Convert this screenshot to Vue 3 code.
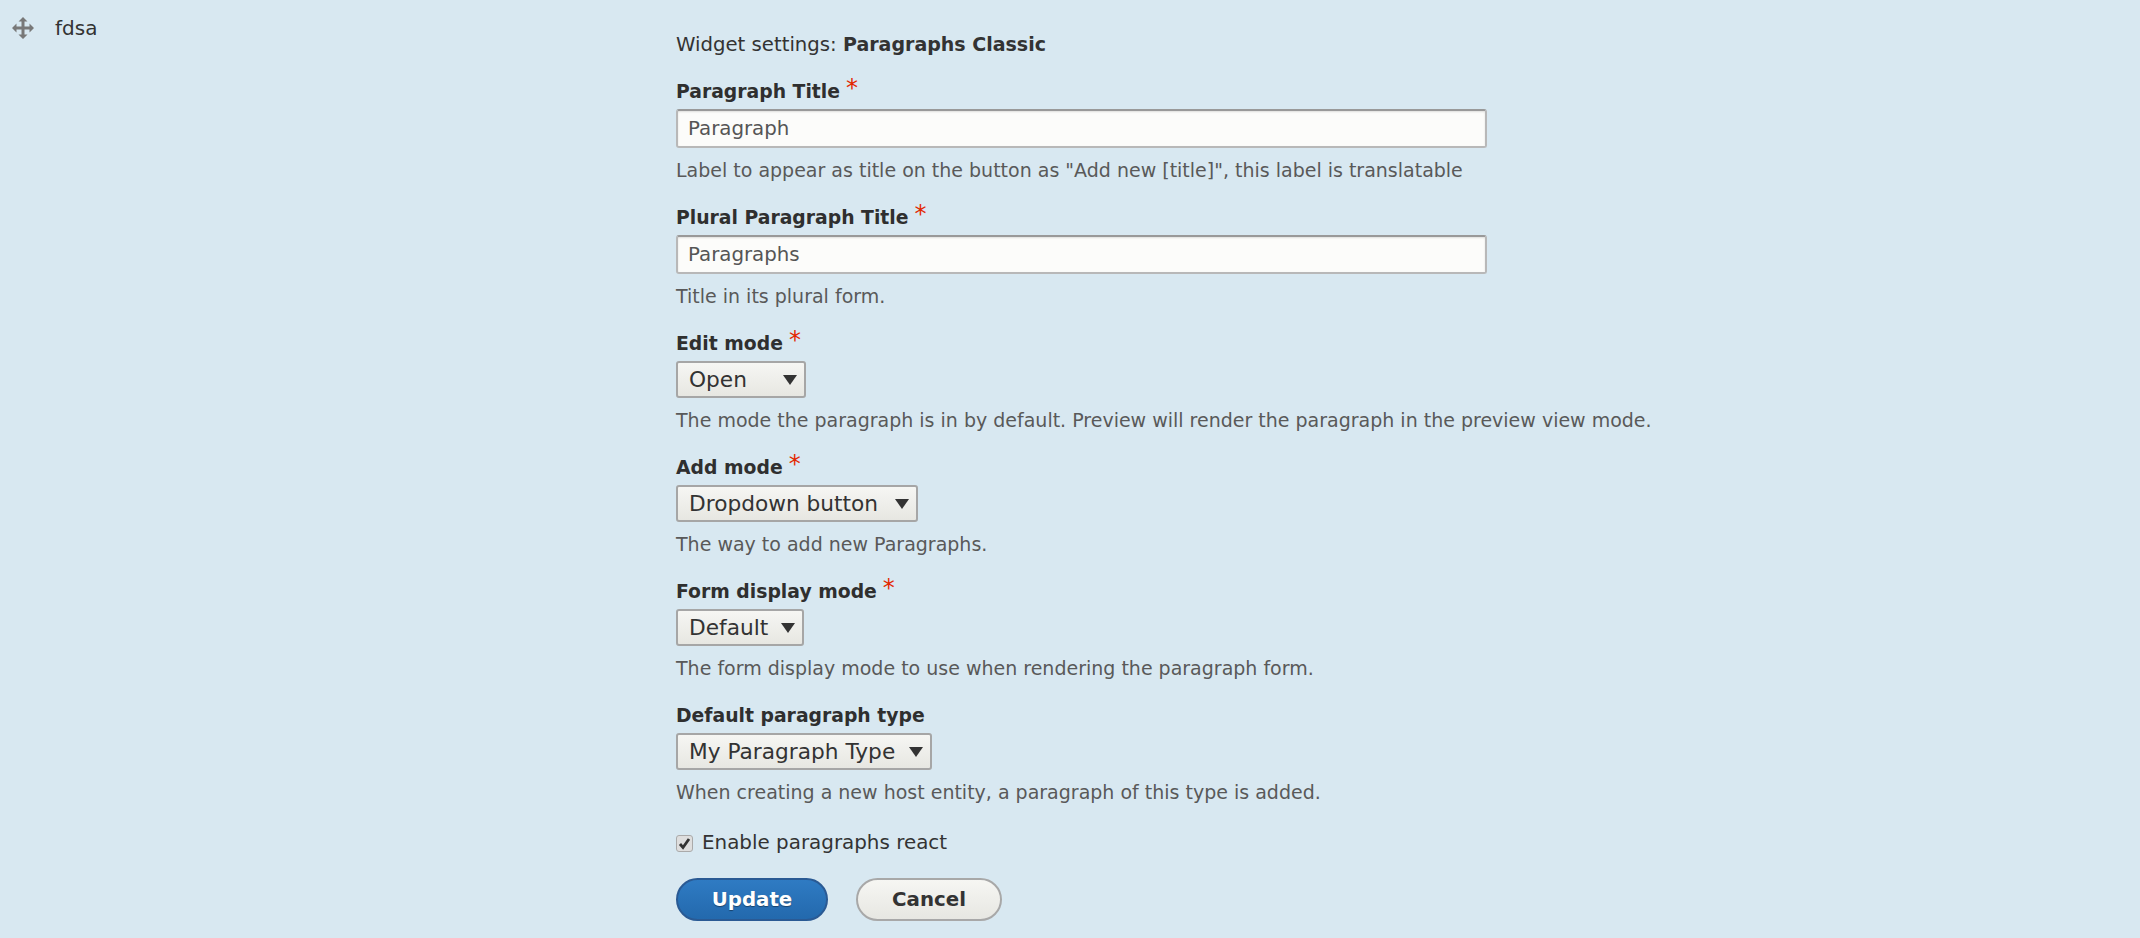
<template>
  <div class="page">
    <div class="row-head">
      <svg class="handle" width="24" height="24" viewBox="0 0 24 24" aria-hidden="true">
        <path d="M12 1l4.500 4.500h-3v5h5v-3l4.500 4.500-4.500 4.500v-3h-5v5h3L12 23l-4.500-4.500h3v-5h-5v3L1 12l4.500-4.500v3h5v-5h-3z" fill="#787878" />
      </svg>
      <span class="row-name">fdsa</span>
    </div>

    <form class="settings" @submit.prevent>
      <div class="summary">Widget settings: <strong>Paragraphs Classic</strong></div>

      <div v-for="field in textFields" :key="field.label" class="field">
        <label class="field__label">{{ field.label }}<span class="req">*</span></label>
        <input class="text-input" type="text" :value="field.value" />
        <div class="field__desc">{{ field.desc }}</div>
      </div>

      <div v-for="field in selectFields" :key="field.label" class="field">
        <label class="field__label">{{ field.label }}<span v-if="field.required" class="req">*</span></label>
        <span class="select-wrap" :style="{ width: field.width + 'px' }">
          <select class="select">
            <option v-for="opt in field.options" :key="opt">{{ opt }}</option>
          </select>
          <span class="select-arrow"></span>
        </span>
        <div class="field__desc">{{ field.desc }}</div>
      </div>

      <label class="check">
        <span class="check__box">
          <svg width="13" height="13" viewBox="0 0 13 13" aria-hidden="true">
            <path d="M2 7l3 3.500L11 2" fill="none" stroke="#333" stroke-width="2.800" />
          </svg>
        </span>
        Enable paragraphs react
      </label>

      <div class="actions">
        <button type="button" class="btn btn--primary">Update</button>
        <button type="button" class="btn">Cancel</button>
      </div>
    </form>
  </div>
</template>

<script setup>
const textFields = [
  {
    label: 'Paragraph Title',
    value: 'Paragraph',
    desc: 'Label to appear as title on the button as "Add new [title]", this label is translatable',
  },
  {
    label: 'Plural Paragraph Title',
    value: 'Paragraphs',
    desc: 'Title in its plural form.',
  },
]

const selectFields = [
  {
    label: 'Edit mode',
    required: true,
    width: 130,
    options: ['Open', 'Closed', 'Preview'],
    desc: 'The mode the paragraph is in by default. Preview will render the paragraph in the preview view mode.',
  },
  {
    label: 'Add mode',
    required: true,
    width: 242,
    options: ['Dropdown button', 'Select list', 'Buttons'],
    desc: 'The way to add new Paragraphs.',
  },
  {
    label: 'Form display mode',
    required: true,
    width: 128,
    options: ['Default'],
    desc: 'The form display mode to use when rendering the paragraph form.',
  },
  {
    label: 'Default paragraph type',
    required: false,
    width: 256,
    options: ['My Paragraph Type'],
    desc: 'When creating a new host entity, a paragraph of this type is added.',
  },
]
</script>

<style>
html,
body {
  margin: 0;
  background: #d8e8f1;
}
</style>

<style scoped>
.page {
  display: flex;
  min-height: 938px;
  box-sizing: border-box;
  background: #d8e8f1;
  font-family: 'DejaVu Sans', Verdana, sans-serif;
  color: #333;
}

.row-head {
  display: flex;
  align-items: flex-start;
  width: 676px;
  flex: none;
  padding: 16px 0 0 11px;
  box-sizing: border-box;
}

.handle {
  flex: none;
}

.row-name {
  margin-left: 20px;
  font-size: 20px;
  line-height: 24px;
}

.settings {
  flex: 1;
  padding-top: 30px;
  font-size: 19.700px;
}

.summary {
  line-height: 28px;
  margin-bottom: 15px;
}

.summary strong {
  font-size: 19px;
}

.field {
  margin-bottom: 17px;
}

.field__label {
  display: block;
  font-size: 18.800px;
  font-weight: 700;
  line-height: 35px;
  color: #2f2f2f;
}

.req {
  color: #e32700;
  margin-left: 6px;
  font-size: 24px;
  line-height: 20px;
  font-weight: 400;
  vertical-align: 2px;
}

.text-input {
  display: block;
  box-sizing: border-box;
  width: 811px;
  height: 39px;
  padding: 0 10px;
  border: 2px solid #b8b8b8;
  border-top-color: #999;
  border-radius: 3px;
  background: #fcfcfa;
  box-shadow: inset 0 1px 2px rgba(0, 0, 0, 0.12);
  font: inherit;
  font-size: 19.800px;
  color: #555;
  outline: none;
}

.select-wrap {
  position: relative;
  display: inline-block;
  vertical-align: top;
}

.select {
  display: block;
  box-sizing: border-box;
  width: 100%;
  height: 37px;
  padding: 0 28px 0 11px;
  border: 2px solid #a6a6a6;
  border-radius: 3px;
  background: linear-gradient(180deg, #f6f6f3 0%, #e7e7e2 100%);
  appearance: none;
  font: inherit;
  font-size: 21.700px;
  color: #333;
  outline: none;
}

.select-arrow {
  position: absolute;
  top: 14px;
  right: 9px;
  width: 0;
  height: 0;
  border-left: 7px solid transparent;
  border-right: 7px solid transparent;
  border-top: 10px solid #333;
  pointer-events: none;
}

.field__desc {
  margin-top: 9px;
  font-size: 19px;
  line-height: 26px;
  color: #595959;
}

.check {
  display: flex;
  align-items: center;
  gap: 9px;
  font-size: 19.900px;
  line-height: 28px;
  margin-top: 24px;
  margin-bottom: 21px;
}

.check__box {
  display: flex;
  align-items: center;
  justify-content: center;
  width: 17px;
  height: 17px;
  box-sizing: border-box;
  border: 1px solid #aaa;
  border-radius: 3px;
  background: #dedede;
}

.actions {
  display: flex;
  gap: 28px;
}

.btn {
  box-sizing: border-box;
  width: 146px;
  height: 43px;
  border: 2px solid #a8a8a8;
  border-radius: 22px;
  background: linear-gradient(180deg, #f6f6f3 0%, #e7e7e2 100%);
  font: inherit;
  font-size: 19.800px;
  font-weight: 700;
  color: #333;
}

.btn--primary {
  width: 152px;
  border-color: #2a5a94;
  background: linear-gradient(180deg, #2f7bc3 0%, #2369ad 100%);
  color: #fff;
  text-shadow: 0 1px 1px rgba(0, 0, 0, 0.4);
}
</style>
